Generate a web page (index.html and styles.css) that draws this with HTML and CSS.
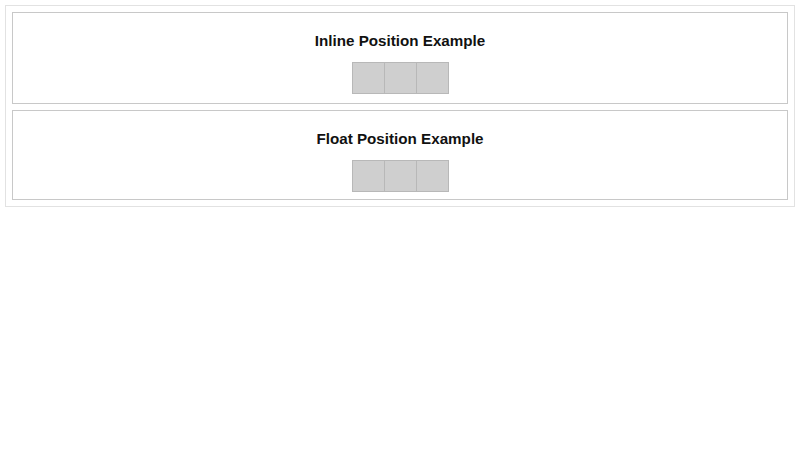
FILE: index.html
```html
<!DOCTYPE html>
<html lang="en">
<head>
    <meta charset="UTF-8">
    <meta name="viewport" content="width=device-width, initial-scale=1.0">
    <title>Position Examples</title>
    <link rel="stylesheet" href="styles.css">
</head>
<body>
<div class="contenedor">
    <div class="seccion">
        <h2 class="titulo">Inline Position Example</h2>
        <div class="fila-inline"><span class="caja"></span><span class="caja"></span><span class="caja"></span></div>
    </div>
    <div class="seccion seccion-float">
        <h2 class="titulo">Float Position Example</h2>
        <div class="fila-float">
            <div class="caja"></div>
            <div class="caja"></div>
            <div class="caja"></div>
        </div>
    </div>
</div>
</body>
</html>
```

FILE: styles.css
```css
body {
    margin: 0;
    font-family: 'Liberation Sans', Arial, sans-serif;
    font-size: 15px;
    color: #111;
    background: #fff;
}

/* Contenedor general */
.contenedor {
    margin: 5px;
    padding: 6px;
    border: 1px solid #e2e2e2;
}

.seccion {
    border: 1px solid #c8c8c8;
    padding: 18px 0 6px;
    margin-bottom: 6px;
    text-align: center;
}

.seccion:last-child {
    margin-bottom: 0;
}

.seccion-float {
    padding-bottom: 7px;
}

.titulo {
    margin: 1px 0 13px;
    font-size: 15.2px;
    font-weight: bold;
}

.caja {
    width: 31px;
    height: 30px;
    background: #cfcfcf;
    border: 1px solid #b8b8b8;
}

/* Cajas en línea */
.fila-inline .caja {
    display: inline-block;
    margin-right: -1px;
}

/* Cajas flotantes */
.fila-float {
    width: 97px;
    margin: 0 auto;
    overflow: hidden;
}

.fila-float .caja {
    float: left;
    margin-right: -1px;
}
```
